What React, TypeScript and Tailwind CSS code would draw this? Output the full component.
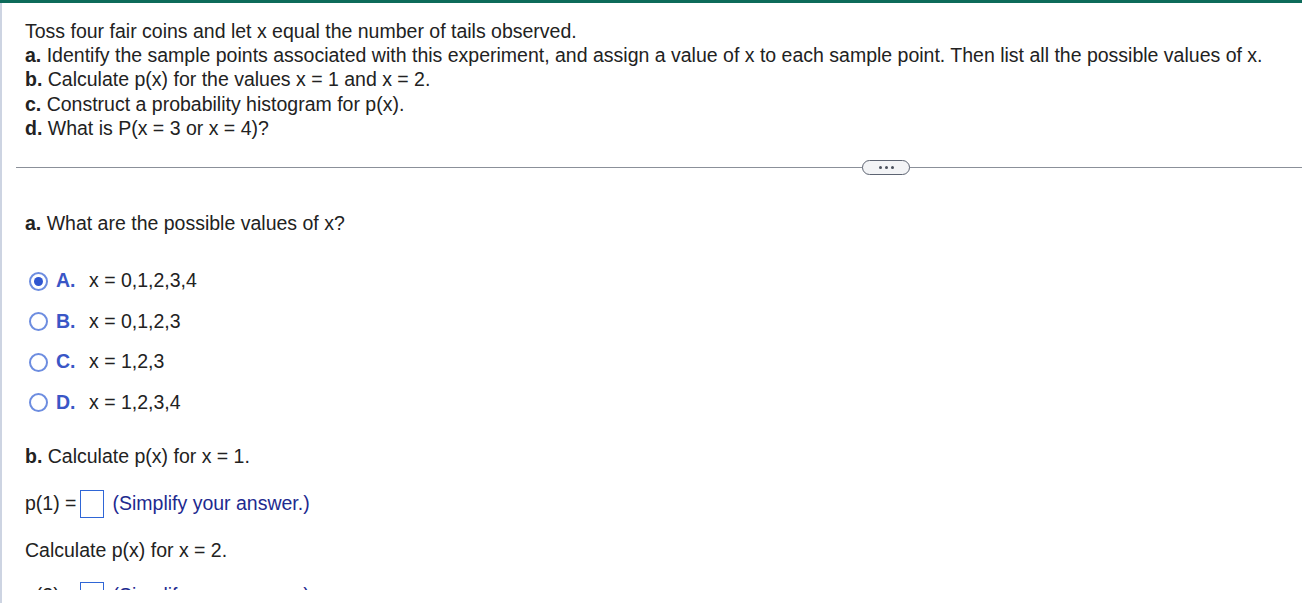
import React from 'react'

const options = [
  { key: 'A', text: 'x = 0,1,2,3,4', selected: true },
  { key: 'B', text: 'x = 0,1,2,3', selected: false },
  { key: 'C', text: 'x = 1,2,3', selected: false },
  { key: 'D', text: 'x = 1,2,3,4', selected: false },
]

function Radio({ selected }: { selected: boolean }) {
  return (
    <span className="w-[19px] h-[19px] rounded-full border-2 border-[#6d8de0] flex items-center justify-center bg-white">
      {selected && <span className="w-[9px] h-[9px] rounded-full bg-[#2f56d0]" />}
    </span>
  )
}

export default function App() {
  return (
    <div className="h-[603px] w-[1302px] bg-white overflow-hidden flex flex-col text-[19.5px] text-[#222] font-['Liberation_Sans',Arial,sans-serif]">
      <div className="h-[3px] shrink-0 bg-[#0d6b5a]" />
      <div className="flex-1 flex overflow-hidden border-l-2 border-[#cdd4e2]">
        <div className="flex-1 h-[587px] overflow-hidden">
          {/* Question stem */}
          <div className="pl-[23px] pt-[16px] leading-[24.2px]">
            <p>Toss four fair coins and let x equal the number of tails observed.</p>
            <p><b>a.</b> Identify the sample points associated with this experiment, and assign a value of x to each sample point. Then list all the possible values of x.</p>
            <p><b>b.</b> Calculate p(x) for the values x = 1 and x = 2.</p>
            <p><b>c.</b> Construct a probability histogram for p(x).</p>
            <p><b>d.</b> What is P(x = 3 or x = 4)?</p>
          </div>

          {/* Divider */}
          <div className="relative ml-[14px] mt-[27px] h-px bg-[#8b9099]">
            <span className="absolute left-[846px] top-[-7px] w-[48px] h-[15px] rounded-full border border-[#5d6472] bg-[#f3f4f6] flex items-center justify-center gap-[3px]">
              <span className="w-[3px] h-[3px] rounded-full bg-[#4a505c]" />
              <span className="w-[3px] h-[3px] rounded-full bg-[#4a505c]" />
              <span className="w-[3px] h-[3px] rounded-full bg-[#4a505c]" />
            </span>
          </div>

          {/* Part a */}
          <div className="pl-[23px] pt-[43px]">
            <p className="leading-[24px]"><b>a.</b> What are the possible values of x?</p>
            <div className="mt-[34px] flex flex-col gap-[16.5px]">
              {options.map(o => (
                <div key={o.key} className="flex items-center h-[24px]">
                  <span className="ml-[4px]"><Radio selected={o.selected} /></span>
                  <span className="ml-[8px] w-[33px] font-bold text-[#3a56c6]">{o.key}.</span>
                  <span>{o.text}</span>
                </div>
              ))}
            </div>

            {/* Part b */}
            <p className="mt-[29px] leading-[24px]"><b>b.</b> Calculate p(x) for x = 1.</p>
            <div className="mt-[22px] flex items-center h-[28px]">
              <span>p(1) =</span>
              <span className="ml-[4px] w-[24px] h-[28px] border border-[#2f66d6] bg-white" />
              <span className="ml-[8px] text-[#1e2a8f]">(Simplify your answer.)</span>
            </div>
            <p className="mt-[20px] leading-[24px]">Calculate p(x) for x = 2.</p>
            <div className="mt-[20px] flex items-center h-[28px]">
              <span>p(2) =</span>
              <span className="ml-[4px] w-[24px] h-[28px] border border-[#2f66d6] bg-white" />
              <span className="ml-[8px] text-[#1e2a8f]">(Simplify your answer.)</span>
            </div>
          </div>
        </div>
      </div>
    </div>
  )
}
